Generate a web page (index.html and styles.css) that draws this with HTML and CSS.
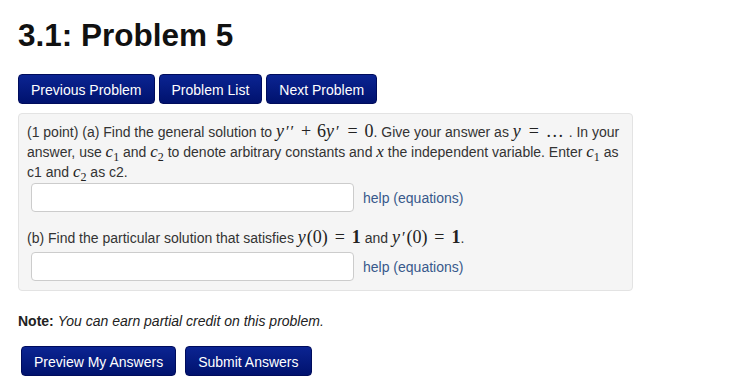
FILE: index.html
```html
<!DOCTYPE html>
<html lang="en">
<head>
    <meta charset="UTF-8">
    <title>3.1: Problem 5</title>
    <link rel="stylesheet" href="styles.css">
</head>
<body>

    <h1 class="page-title">3.1: Problem 5</h1>

    <div class="nav">
        <a href="#" class="btn">Previous Problem</a>
        <a href="#" class="btn">Problem List</a>
        <a href="#" class="btn">Next Problem</a>
    </div>

    <div class="problem">
        <p class="text">
            (1 point) (a) Find the general solution to
            <span class="m eq"><i>y</i><span class="pr">&#8242;&#8242;</span><span class="op">+</span>6<i>y</i><span class="pr">&#8242;</span><span class="rel">=</span>0</span>. Give your answer as
            <span class="m eq"><i>y</i><span class="rel">=</span><span class="dots">&hellip;</span></span> . In your answer, use
            <span class="m"><i>c</i><sub>1</sub></span> and <span class="m"><i>c</i><sub>2</sub></span>
            to denote arbitrary constants and <span class="m"><i>x</i></span> the independent variable. Enter
            <span class="m"><i>c</i><sub>1</sub></span> as c1 and <span class="m"><i>c</i><sub>2</sub></span> as c2.
        </p>
        <div class="answer-row first">
            <input type="text" class="answer">
            <a href="#" class="help">help (equations)</a>
        </div>

        <p class="text part-b">
            (b) Find the particular solution that satisfies
            <span class="m eq"><i>y</i>(0)<span class="rel">=</span><b>1</b></span> and
            <span class="m eq"><i>y</i><span class="pr">&#8242;</span>(0)<span class="rel">=</span><b>1</b></span>.
        </p>
        <div class="answer-row">
            <input type="text" class="answer">
            <a href="#" class="help">help (equations)</a>
        </div>
    </div>

    <p class="note"><b>Note:</b> <i>You can earn partial credit on this problem.</i></p>

    <div class="submit">
        <a href="#" class="btn">Preview My Answers</a>
        <a href="#" class="btn">Submit Answers</a>
    </div>

</body>
</html>
```

FILE: styles.css
```css
body {
    margin: 0;
    padding: 0 18px;
    font-family: "Liberation Sans", Arial, sans-serif;
    font-size: 14px;
    color: #333;
    background-color: #fff;
}

.page-title {
    margin: 17px 0 0 0;
    font-size: 31.5px;
    line-height: 36px;
    font-weight: bold;
    color: #111;
}

/* 按钮 */
.btn {
    display: inline-block;
    height: 30px;
    line-height: 30px;
    padding: 0 12px;
    border-radius: 4px;
    background: linear-gradient(#0b2492, #00126e);
    border: 1px solid #000c5c;
    box-sizing: border-box;
    color: #fff;
    font-size: 14px;
    text-decoration: none;
}

.nav {
    display: flex;
    gap: 4px;
    margin-top: 21px;
}

/* 题目框 */
.problem {
    width: 615px;
    box-sizing: border-box;
    margin-top: 9px;
    padding: 8px 8px 9px 8px;
    background-color: #f5f5f5;
    border: 1px solid #e3e3e3;
    border-radius: 4px;
}

.text {
    margin: 0;
    line-height: 20px;
}

/* 公式 */
.m {
    font-family: "Liberation Serif", "Times New Roman", serif;
    font-size: 17px;
    line-height: 1;
    white-space: nowrap;
    color: #222;
}

.eq {
    font-size: 18px;
}

.eq i {
    margin-right: 1px;
}

.m .op,
.m .rel {
    display: inline-block;
    width: 0.778em;
    text-align: center;
}

.m .op {
    margin: 0 0.222em;
}

.m .rel {
    margin: 0 0.278em;
}

.m .pr {
    margin-left: 1px;
    font-size: 16px;
    letter-spacing: 1px;
}

.m .dots {
    letter-spacing: 1px;
}

.m sub {
    font-size: 12px;
    font-style: normal;
    line-height: 0;
}

.answer-row {
    display: flex;
    align-items: center;
    gap: 9px;
    margin-left: 4px;
    margin-top: 4px;
}

.answer-row.first {
    margin-top: 1px;
}

.answer {
    width: 323px;
    height: 29px;
    box-sizing: border-box;
    border: 1px solid #ccc;
    border-radius: 4px;
    background-color: #fff;
    margin: 0;
}

.help {
    color: #38598b;
    text-decoration: none;
    font-size: 14px;
}

.part-b {
    margin-top: 16px;
}

.note {
    margin: 22px 0 0 0;
    font-size: 14px;
    color: #222;
}

.submit {
    display: flex;
    gap: 9px;
    margin: 17px 0 0 3px;
}
```
